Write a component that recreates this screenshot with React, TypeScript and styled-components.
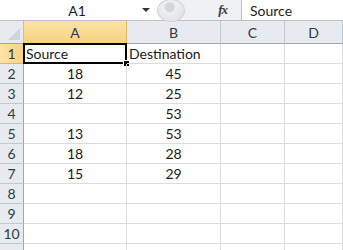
import React from 'react';
import styled, { createGlobalStyle } from 'styled-components';

const GlobalStyle = createGlobalStyle`
  body {
    margin: 0;
    background: #ffffff;
    font-family: "Open Sans", "Liberation Sans", sans-serif;
  }
`;

const columns = ['A', 'B', 'C', 'D'];
const rows: (string | number | null)[][] = [
  ['Source', 'Destination', null, null],
  [18, 45, null, null],
  [12, 25, null, null],
  [null, 53, null, null],
  [13, 53, null, null],
  [18, 28, null, null],
  [15, 29, null, null],
  [null, null, null, null],
  [null, null, null, null],
  [null, null, null, null],
];

const App: React.FC = () => (
  <>
    <GlobalStyle />
    <Page>
      <FormulaBar>
        <NameBox>
          <NameText>A1</NameText>
          <DropArrow />
        </NameBox>
        <Splitter>
          <Knob />
        </Splitter>
        <FxArea>
          <Fx>fx</Fx>
        </FxArea>
        <FormulaInput>Source</FormulaInput>
      </FormulaBar>
      <Grid>
        <Corner>
          <CornerTriangle />
        </Corner>
        {columns.map((c) => (
          <ColHead key={c} $active={c === 'A'}>{c}</ColHead>
        ))}
        {rows.map((r, i) => (
          <React.Fragment key={i}>
            <RowHead $active={i === 0}>{i + 1}</RowHead>
            {r.map((v, j) => (
              <Cell key={j} $text={typeof v === 'string'}>
                {v}
                {i === 0 && j === 0 && (
                  <>
                    <Selection />
                    <FillHandle />
                  </>
                )}
              </Cell>
            ))}
          </React.Fragment>
        ))}
        <RowHead $active={false} />
        {columns.map((c) => (
          <Cell key={c} $text={false} />
        ))}
      </Grid>
    </Page>
  </>
);

const Page = styled.div`
  width: 343px;
  height: 250px;
  overflow: hidden;
`;

const FormulaBar = styled.div`
  display: flex;
  height: 20px;
  border-bottom: 1px solid #b9c0c9;
  background: #eef0f3;
`;

const NameBox = styled.div`
  display: flex;
  align-items: center;
  width: 156px;
  background: #ffffff;
  font-family: "Lato", "Open Sans", sans-serif;
  font-size: 14px;
  color: #1e1e1e;
`;

const NameText = styled.span`
  flex: 1;
  text-align: center;
  padding-left: 12px;
`;

const DropArrow = styled.span`
  width: 0;
  height: 0;
  margin-right: 6px;
  border-left: 4px solid transparent;
  border-right: 4px solid transparent;
  border-top: 4px solid #333;
`;

const Splitter = styled.div`
  position: relative;
  width: 20px;
  background: #ffffff;
`;

const Knob = styled.div`
  position: absolute;
  left: 1px;
  top: -1px;
  width: 26px;
  height: 21px;
  border-radius: 50%;
  background: radial-gradient(ellipse at 45% 35%, #d2d5d9 0 20%, #eceef0 30%, #e2e5e8 70%);
  border: 1px solid #cfd3d8;
`;

const FxArea = styled.div`
  display: flex;
  align-items: center;
  justify-content: flex-end;
  width: 66px;
  padding-right: 14px;
  border-right: 1px solid #b9c0c9;
  background: #eef0f3;
  box-sizing: border-box;
`;

const Fx = styled.span`
  font-family: "Liberation Serif", serif;
  font-style: italic;
  font-weight: bold;
  font-size: 13px;
  color: #3b3b3b;
  letter-spacing: -1px;
`;

const FormulaInput = styled.div`
  flex: 1;
  display: flex;
  align-items: center;
  padding-left: 8px;
  background: #ffffff;
  font-family: "Lato", "Open Sans", sans-serif;
  font-size: 14px;
  color: #1e1e1e;
`;

const Grid = styled.div`
  display: grid;
  grid-template-columns: 24px 103px 94px 64px 1fr;
  grid-template-rows: 23px repeat(11, 20px);
  background: #ffffff;
  font-family: "Lato", "Open Sans", sans-serif;
  font-size: 14px;
  color: #1a1a1a;
`;

const headBase = `
  display: flex;
  align-items: center;
  justify-content: center;
  box-sizing: border-box;
  font-family: "Lato", "Open Sans", sans-serif;
  font-size: 14px;
  color: #303a46;
`;

const Corner = styled.div`
  position: relative;
  box-sizing: border-box;
  background: #e7eaee;
  border-right: 1px solid #b9c0c9;
  border-bottom: 1px solid #9ea6b1;
`;

const CornerTriangle = styled.div`
  position: absolute;
  right: 3px;
  bottom: 3px;
  width: 0;
  height: 0;
  border-left: 12px solid transparent;
  border-bottom: 12px solid #cfd4da;
`;

const ColHead = styled.div<{ $active: boolean }>`
  ${headBase}
  background: ${(p) => (p.$active ? 'linear-gradient(#fce3a6, #f6d37f)' : '#e7eaee')};
  border-right: 1px solid ${(p) => (p.$active ? '#e0b760' : '#c3c9d1')};
  border-bottom: 1px solid ${(p) => (p.$active ? '#e0b760' : '#9ea6b1')};
`;

const RowHead = styled.div<{ $active: boolean }>`
  ${headBase}
  background: ${(p) => (p.$active ? 'linear-gradient(90deg, #fce3a6, #f6d37f)' : '#e7eaee')};
  border-right: 1px solid ${(p) => (p.$active ? '#e0b760' : '#9ea6b1')};
  border-bottom: 1px solid ${(p) => (p.$active ? '#e0b760' : '#c3c9d1')};
`;

const Cell = styled.div<{ $text: boolean }>`
  position: relative;
  display: flex;
  align-items: center;
  justify-content: ${(p) => (p.$text ? 'flex-start' : 'center')};
  padding-left: ${(p) => (p.$text ? '2px' : '0')};
  box-sizing: border-box;
  border-right: 1px solid #dadcdd;
  border-bottom: 1px solid #dadcdd;
  white-space: nowrap;
`;

const Selection = styled.div`
  position: absolute;
  left: -1px;
  top: -1px;
  right: -1px;
  bottom: -1px;
  border: 2px solid #000000;
  pointer-events: none;
`;

const FillHandle = styled.div`
  position: absolute;
  right: -4px;
  bottom: -4px;
  width: 5px;
  height: 5px;
  background: #000000;
  border: 1px solid #ffffff;
`;

export default App;
